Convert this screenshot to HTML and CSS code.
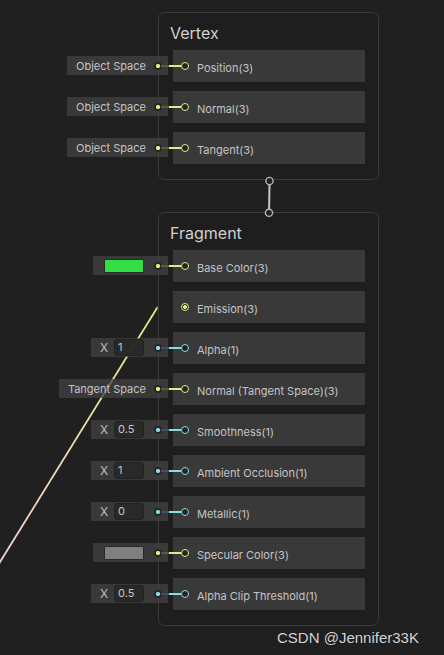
FILE: index.html
```html
<!DOCTYPE html>
<html>
<head>
<meta charset="utf-8">
<link rel="stylesheet" href="styles.css">
</head>
<body>
<svg class="wires" width="444" height="655" viewBox="0 0 444 655">
  <defs>
    <linearGradient id="eg" x1="0" y1="562" x2="157.5" y2="307" gradientUnits="userSpaceOnUse">
      <stop offset="0" stop-color="#efd2d4"/>
      <stop offset="1" stop-color="#e4e67e"/>
    </linearGradient>
  </defs>
  <line x1="-10" y1="578.2" x2="157.5" y2="307.3" stroke="url(#eg)" stroke-width="1.8"/>
  <line x1="157" y1="307.3" x2="181" y2="307.3" stroke="#6c6c4c" stroke-width="2"/>
</svg>

<div class="graph">
  <div class="node">
    <div class="title">Vertex</div>
    <div class="rows">
      <div class="slot v3">
        <div class="inp"><span class="txt">Object Space</span><span class="odot"></span></div>
        <span class="wire"></span><span class="port"></span><span class="label">Position(3)</span>
      </div>
      <div class="slot v3">
        <div class="inp"><span class="txt">Object Space</span><span class="odot"></span></div>
        <span class="wire"></span><span class="port"></span><span class="label">Normal(3)</span>
      </div>
      <div class="slot v3">
        <div class="inp"><span class="txt">Object Space</span><span class="odot"></span></div>
        <span class="wire"></span><span class="port"></span><span class="label">Tangent(3)</span>
      </div>
    </div>
  </div>

  <div class="node fragment">
    <div class="title">Fragment</div>
    <div class="rows">
      <div class="slot v3">
        <div class="inp sw"><span class="swatch green"></span><span class="odot"></span></div>
        <span class="wire"></span><span class="port"></span><span class="label">Base Color(3)</span>
      </div>
      <div class="slot v3">
        <span class="port filled"></span><span class="label">Emission(3)</span>
      </div>
      <div class="slot v1">
        <div class="inp num"><span class="x">X</span><span class="fld">1</span><span class="odot"></span></div>
        <span class="wire"></span><span class="port"></span><span class="label">Alpha(1)</span>
      </div>
      <div class="slot v3">
        <div class="inp"><span class="txt">Tangent Space</span><span class="odot"></span></div>
        <span class="wire"></span><span class="port"></span><span class="label">Normal (Tangent Space)(3)</span>
      </div>
      <div class="slot v1">
        <div class="inp num"><span class="x">X</span><span class="fld">0.5</span><span class="odot"></span></div>
        <span class="wire"></span><span class="port"></span><span class="label">Smoothness(1)</span>
      </div>
      <div class="slot v1">
        <div class="inp num"><span class="x">X</span><span class="fld">1</span><span class="odot"></span></div>
        <span class="wire"></span><span class="port"></span><span class="label">Ambient Occlusion(1)</span>
      </div>
      <div class="slot v1">
        <div class="inp num"><span class="x">X</span><span class="fld">0</span><span class="odot"></span></div>
        <span class="wire"></span><span class="port"></span><span class="label">Metallic(1)</span>
      </div>
      <div class="slot v3">
        <div class="inp sw"><span class="swatch gray"></span><span class="odot"></span></div>
        <span class="wire"></span><span class="port"></span><span class="label">Specular Color(3)</span>
      </div>
      <div class="slot v1">
        <div class="inp num"><span class="x">X</span><span class="fld">0.5</span><span class="odot"></span></div>
        <span class="wire"></span><span class="port"></span><span class="label">Alpha Clip Threshold(1)</span>
      </div>
    </div>
  </div>
</div>

<svg class="link" width="444" height="655" viewBox="0 0 444 655">
  <line x1="269.5" y1="184.6" x2="269.1" y2="209.2" stroke="#c6c6c6" stroke-width="2"/>
  <circle cx="269.5" cy="181" r="3.6" fill="#222" stroke="#b4b4b4" stroke-width="1.4"/>
  <circle cx="269" cy="212.8" r="3.6" fill="#222" stroke="#b4b4b4" stroke-width="1.4"/>
</svg>

<div class="wm">CSDN @Jennifer33K</div>
</body>
</html>
```

FILE: styles.css
```css
html, body {
  margin: 0;
  padding: 0;
}
body {
  width: 444px;
  height: 655px;
  overflow: hidden;
  background: #202020;
  position: relative;
  font-family: Inter, "Noto Sans", sans-serif;
  color: #c4c4c4;
}
.wires {
  position: absolute;
  left: 0;
  top: 0;
  z-index: 0;
}
.link {
  position: absolute;
  left: 0;
  top: 0;
  z-index: 3;
  pointer-events: none;
}
.graph {
  position: relative;
  z-index: 1;
  padding: 12px 0 0 158px;
  display: flex;
  flex-direction: column;
  gap: 32px;
}
.node {
  width: 221px;
  box-sizing: border-box;
  border: 1px solid #3a3a3a;
  border-radius: 7px;
  background: #1e1e1e;
  padding: 10px 13px 15px 11px;
}
.title {
  height: 20px;
  line-height: 20px;
  font-size: 16px;
  color: #d0d0d0;
  margin-bottom: 7px;
}
.rows {
  margin-left: 3px;
  display: flex;
  flex-direction: column;
  gap: 9px;
}
.slot {
  --c: #e6e884;
  --cd: #5b5b45;
  position: relative;
  height: 32px;
  background: #393939;
  display: flex;
  align-items: center;
  padding-left: 8px;
  font-size: 11px;
}
.slot.v1 {
  --c: #86dde4;
  --cd: #3c5557;
}
.port {
  position: relative;
  z-index: 2;
  width: 8px;
  height: 8px;
  box-sizing: border-box;
  border: 1.5px solid var(--c);
  border-radius: 50%;
  background: #232323;
  flex: none;
}
.port.filled {
  background: radial-gradient(circle, var(--c) 0 1.6px, #232323 2.2px);
}
.label {
  margin-left: 8px;
  padding-top: 3px;
  white-space: nowrap;
  color: #c4c4c4;
}
.wire {
  position: absolute;
  z-index: 2;
  left: -12px;
  top: 15px;
  width: 20px;
  height: 2px;
  background: linear-gradient(90deg, var(--cd) 0 8px, var(--c) 8px);
}
.inp {
  position: absolute;
  right: calc(100% + 5px);
  top: 6px;
  height: 19px;
  box-sizing: border-box;
  display: flex;
  align-items: center;
  padding: 0 6px 0 9px;
  background: rgba(66, 66, 66, 0.76);
  white-space: nowrap;
  font-size: 11px;
  color: #c4c4c4;
}
.inp .txt {
  margin-right: 8px;
}
.inp.sw {
  padding-left: 11px;
}
.swatch {
  width: 40px;
  height: 14px;
  box-sizing: border-box;
  border: 1px solid #2a2a2a;
  border-radius: 1px;
  margin-right: 10px;
}
.swatch.green {
  background: #33e044;
}
.swatch.gray {
  background: #808080;
}
.x {
  font-size: 12px;
  width: 7px;
  margin-right: 7px;
  color: #bdbdbd;
}
.fld {
  width: 30px;
  height: 17px;
  box-sizing: border-box;
  border: 1px solid #222;
  border-radius: 3px;
  background: rgba(40, 40, 40, 0.92);
  padding-left: 3px;
  line-height: 15px;
  margin-right: 10px;
  color: #c6c6c6;
}
.odot {
  width: 8px;
  height: 8px;
  border-radius: 50%;
  flex: none;
  background: radial-gradient(circle, var(--c) 0 1.8px, #262626 2.4px);
}
.wm {
  position: absolute;
  z-index: 4;
  left: 277px;
  top: 629px;
  font-family: "Liberation Sans", Arial, sans-serif;
  font-size: 15px;
  line-height: 18px;
  color: #d4d4d4;
  text-shadow: 0 0 1px rgba(0, 0, 0, 0.4);
  white-space: nowrap;
}
```
